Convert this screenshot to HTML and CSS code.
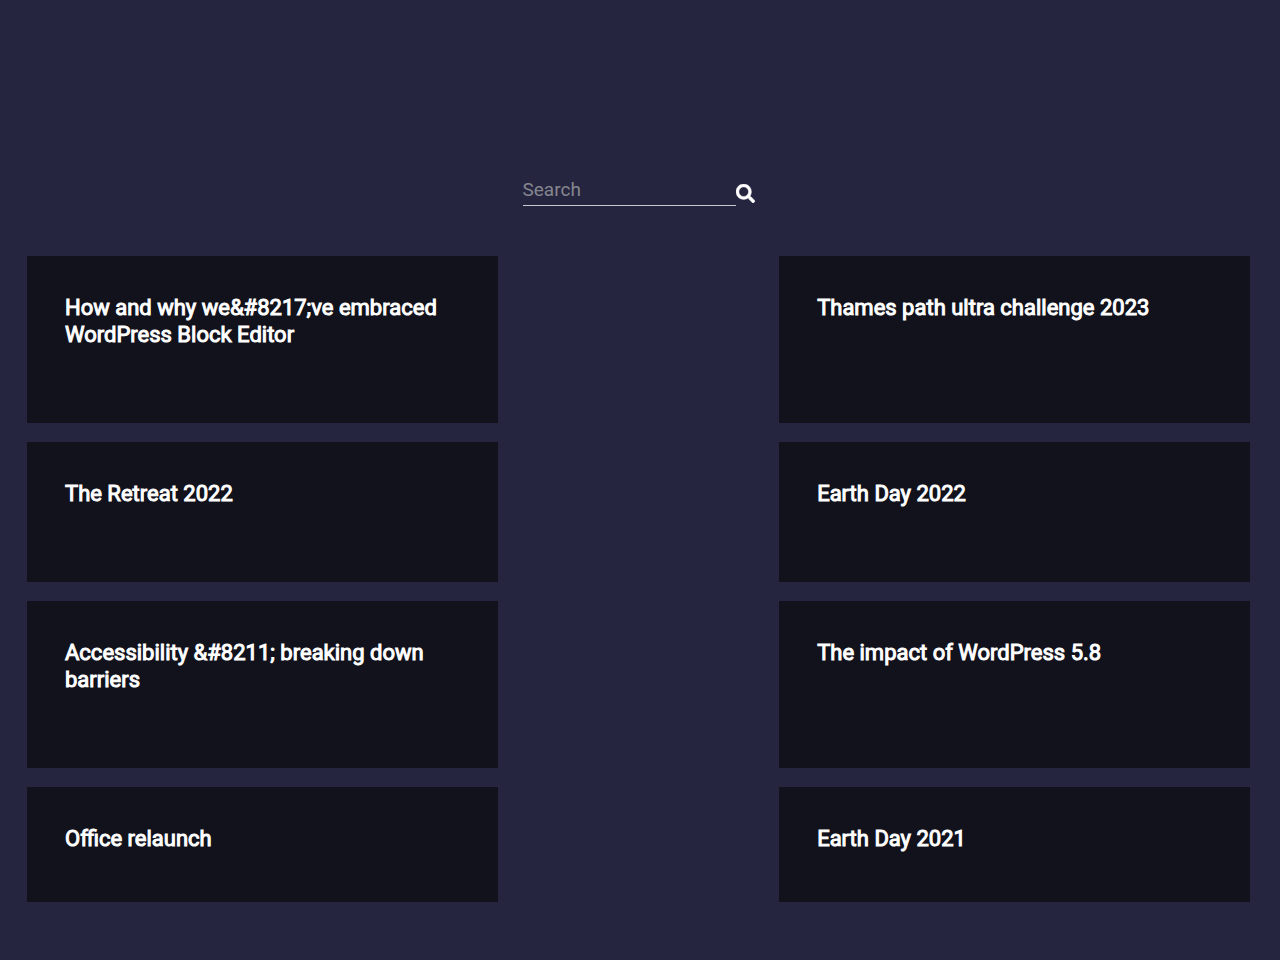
FILE: index.html
```
<!DOCTYPE html>
<html lang="en">
<head>
    <meta charset="UTF-8">
    <meta name="viewport" content="width=device-width, initial-scale=1.0">
    <title>Search posts</title>
    <link rel="stylesheet" href="styles.css">
</head>

<body>
    <form class="search">
        <input class="search-input" type="text" placeholder="Search" aria-label="Search">
        <button class="search-button" type="submit" aria-label="Search">
            <svg class="search-icon" viewBox="0 0 512 512" aria-hidden="true">
                <path d="M505 442.700L405.300 343c-4.500-4.500-10.600-7-17-7H372c27.600-35.300 44-79.700 44-128C416 93.100 322.900 0 208 0S0 93.100 0 208s93.100 208 208 208c48.300 0 92.700-16.400 128-44v16.300c0 6.400 2.500 12.500 7 17l99.700 99.700c9.400 9.400 24.600 9.400 33.900 0l28.300-28.300c9.400-9.400 9.400-24.600.1-34zM208 336c-70.700 0-128-57.200-128-128 0-70.700 57.200-128 128-128 70.700 0 128 57.200 128 128 0 70.700-57.200 128-128 128z"/>
            </svg>
        </button>
    </form>

    <main class="posts">
        <article class="post">
            <h2 class="post-title">How and why we&amp;#8217;ve embraced WordPress Block Editor</h2>
        </article>
        <article class="post">
            <h2 class="post-title">Thames path ultra challenge 2023</h2>
        </article>
        <article class="post">
            <h2 class="post-title">The Retreat 2022</h2>
        </article>
        <article class="post">
            <h2 class="post-title">Earth Day 2022</h2>
        </article>
        <article class="post">
            <h2 class="post-title">Accessibility &amp;#8211; breaking down barriers</h2>
        </article>
        <article class="post">
            <h2 class="post-title">The impact of WordPress 5.8</h2>
        </article>
        <article class="post">
            <h2 class="post-title">Office relaunch</h2>
        </article>
        <article class="post">
            <h2 class="post-title">Earth Day 2021</h2>
        </article>
    </main>
</body>

</html>
```
FILE: styles.css
```
* {
    box-sizing: border-box;
}

body {
    margin: 0;
    padding: 174px 30px 58px 27px;
    background-color: #25253f;
    color: #ffffff;
    font-family: Roboto, sans-serif;
}

/* Search bar */
.search {
    display: flex;
    justify-content: center;
    align-items: center;
    margin-bottom: 50px;
}

.search-input {
    width: 213px;
    height: 32px;
    padding: 0;
    border: 0;
    border-bottom: 1px solid #c8c8d0;
    border-radius: 0;
    background: none;
    color: #ffffff;
    font-family: inherit;
    font-size: 19px;
    outline: none;
}

.search-input::placeholder {
    color: #85858f;
    opacity: 1;
}

.search-button {
    padding: 6px 0 0;
    border: 0;
    background: none;
    cursor: pointer;
}

.search-icon {
    display: block;
    width: 19px;
    height: 19px;
    fill: #ffffff;
    stroke: #ffffff;
    stroke-width: 10;
}

/* Posts */
.posts {
    display: grid;
    grid-template-columns: 1fr 1fr;
    column-gap: 23%;
    row-gap: 19px;
    max-height: 646px; /* the last row is cut short */
    overflow: hidden;
}

.post {
    padding: 38px 38px 75px;
    background-color: #12121c;
}

.post-title {
    margin: 0;
    font-size: 22px;
    font-weight: 400;
    line-height: 27px;
    -webkit-text-stroke: 1px #ffffff; /* heavier regular face */
}
```
